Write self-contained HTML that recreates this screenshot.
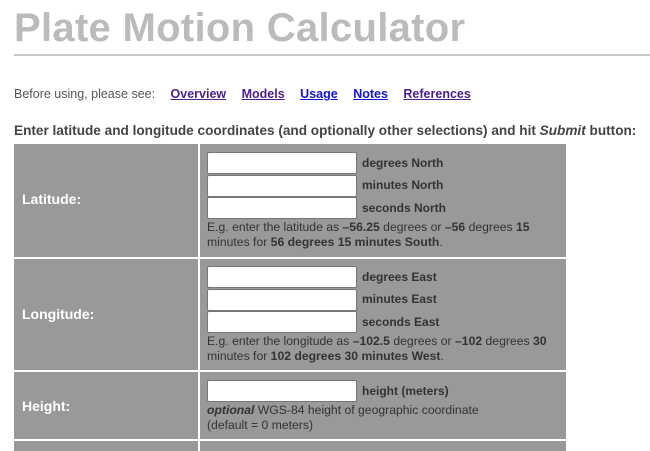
<!DOCTYPE html>
<html><head><style>
body{margin:0;width:650px;height:445px;overflow:hidden;background:#fff;font-family:"Liberation Sans",sans-serif;position:relative}
.a{position:absolute;white-space:nowrap}
h1{position:absolute;left:14px;top:6px;margin:0;font-size:40px;font-weight:bold;color:#bbb;letter-spacing:0.3px}
.hr{position:absolute;left:14px;top:54px;width:636px;height:2px;background:#c8c8c8}
.nav{left:14px;top:87px;font-size:12.5px;color:#555}
.nav a{color:#4b1f8a;font-weight:bold;text-decoration:underline;margin-left:12px}
.nav a.u{color:#1515d0}
.hd{left:14px;top:123px;font-size:13.6px;font-weight:bold;color:#444}
.c{position:absolute;background:#999}
.lb{position:absolute;color:#fff;font-weight:bold;font-size:14px}
.in{position:absolute;left:207px;width:148px;height:20px;background:#fff;border:1px solid #777;border-radius:2px}
.t{position:absolute;left:362px;font-size:12px;font-weight:bold;color:#333}
.s{position:absolute;left:207px;font-size:12.2px;color:#333;line-height:15px;white-space:normal;width:350px}
</style></head><body>
<h1>Plate Motion Calculator</h1>
<div class="hr"></div>
<div class="a nav">Before using, please see: <a>Overview</a> <a>Models</a> <a class="u">Usage</a> <a class="u">Notes</a> <a>References</a></div>
<div class="a hd">Enter latitude and longitude coordinates (and optionally other selections) and hit <i>Submit</i> button:</div>

<div class="c" style="left:14px;top:144px;width:184px;height:113px"></div>
<div class="c" style="left:200px;top:144px;width:366px;height:113px"></div>
<div class="c" style="left:14px;top:259px;width:184px;height:111px"></div>
<div class="c" style="left:200px;top:259px;width:366px;height:111px"></div>
<div class="c" style="left:14px;top:372px;width:184px;height:67px"></div>
<div class="c" style="left:200px;top:372px;width:366px;height:67px"></div>
<div class="c" style="left:14px;top:441px;width:184px;height:10px"></div>
<div class="c" style="left:200px;top:441px;width:366px;height:10px"></div>

<div class="lb" style="left:22px;top:191px">Latitude:</div>
<div class="in" style="top:152px"></div><div class="t" style="top:156px">degrees North</div>
<div class="in" style="top:175px"></div><div class="t" style="top:178px">minutes North</div>
<div class="in" style="top:197px"></div><div class="t" style="top:201px">seconds North</div>
<div class="s" style="top:220px">E.g. enter the latitude as <b>–56.25</b> degrees or <b>–56</b> degrees <b>15</b> minutes for <b>56 degrees 15 minutes South</b>.</div>

<div class="lb" style="left:22px;top:306px">Longitude:</div>
<div class="in" style="top:266px"></div><div class="t" style="top:270px">degrees East</div>
<div class="in" style="top:289px"></div><div class="t" style="top:292px">minutes East</div>
<div class="in" style="top:311px"></div><div class="t" style="top:315px">seconds East</div>
<div class="s" style="top:334px">E.g. enter the longitude as <b>–102.5</b> degrees or <b>–102</b> degrees <b>30</b> minutes for <b>102 degrees 30 minutes West</b>.</div>

<div class="lb" style="left:22px;top:398px">Height:</div>
<div class="in" style="top:380px"></div><div class="t" style="top:384px">height (meters)</div>
<div class="s" style="top:403px"><b><i>optional</i></b> WGS-84 height of geographic coordinate<br>(default = 0 meters)</div>
</body></html>
